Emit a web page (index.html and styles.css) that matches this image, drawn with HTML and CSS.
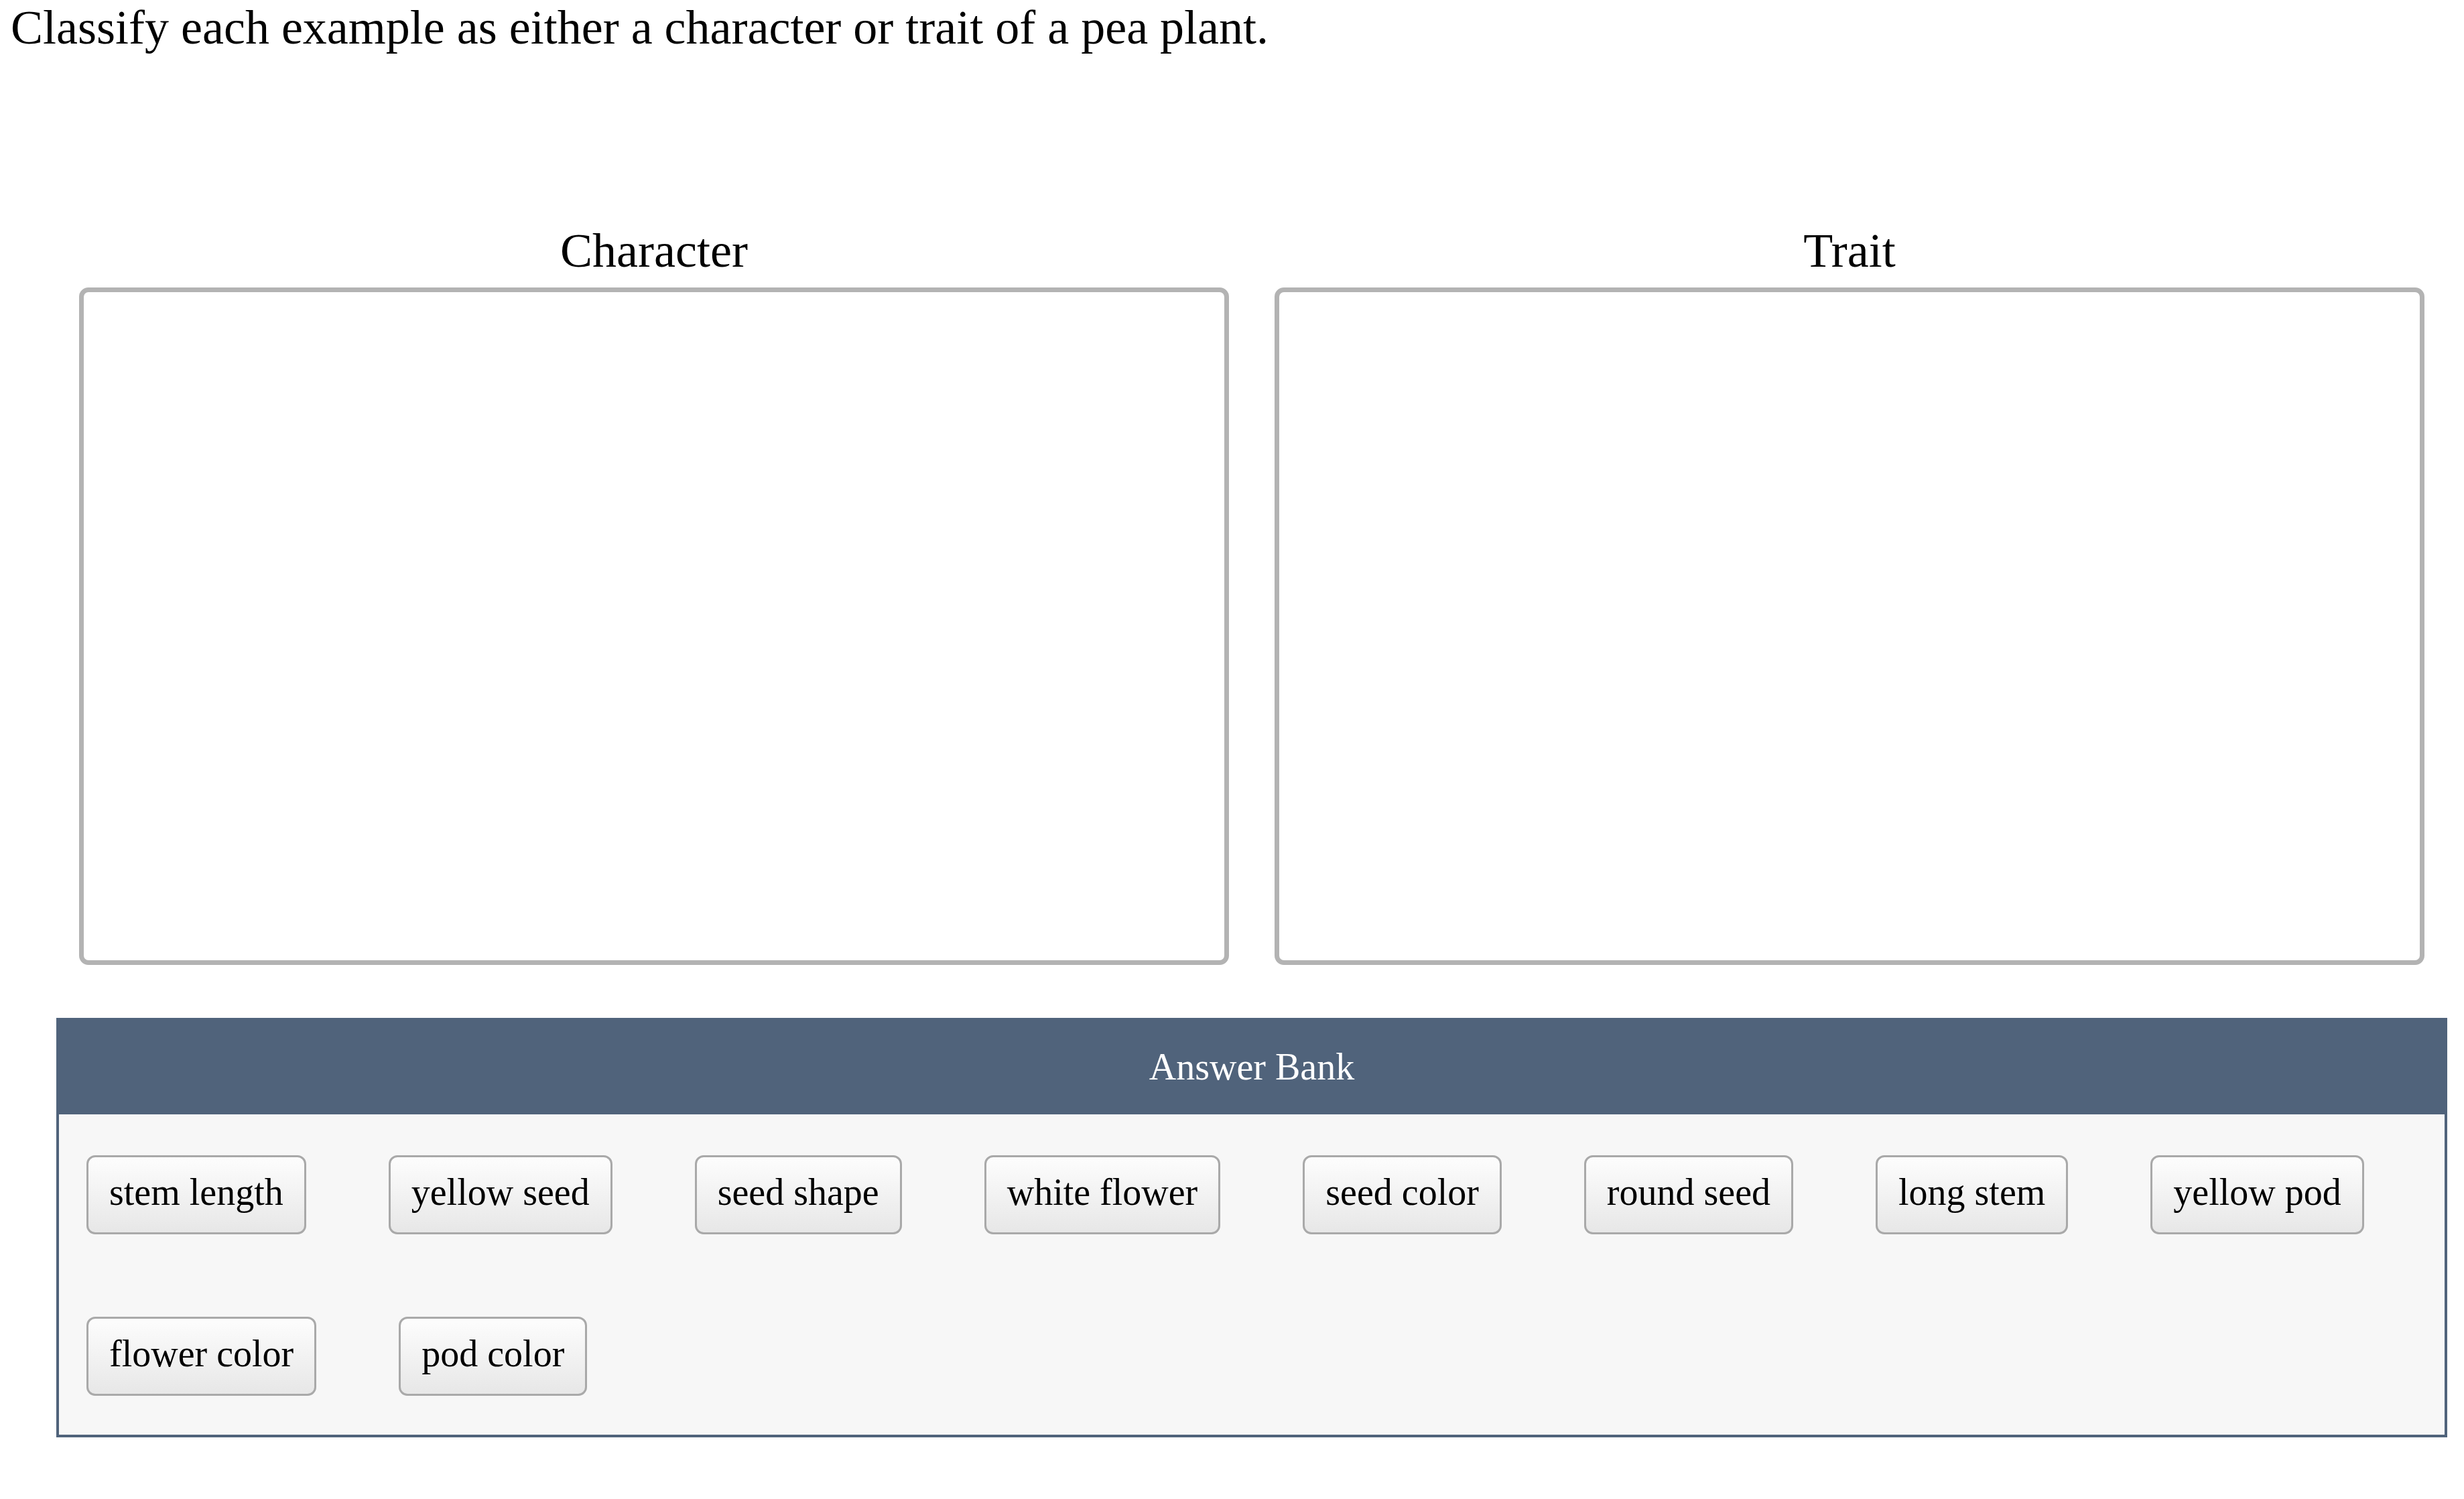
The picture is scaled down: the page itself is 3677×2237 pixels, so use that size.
FILE: index.html
```html
<!DOCTYPE html>
<html lang="en">
<head>
  <meta charset="UTF-8" />
  <title>Classify - Character or Trait</title>
  <link rel="stylesheet" href="styles.css">
</head>
<body>
  <!-- Question -->
  <p class="prompt">Classify each example as either a character or trait of a pea plant.</p>

  <!-- Drop targets -->
  <div class="bins">
    <div class="bin">
      <div class="bin-label">Character</div>
      <div class="bin-box"></div>
    </div>
    <div class="bin">
      <div class="bin-label">Trait</div>
      <div class="bin-box"></div>
    </div>
  </div>

  <!-- Answer bank -->
  <div class="bank">
    <div class="bank-header">Answer Bank</div>
    <div class="bank-items">
      <div class="chip">stem length</div>
      <div class="chip">yellow seed</div>
      <div class="chip">seed shape</div>
      <div class="chip">white flower</div>
      <div class="chip">seed color</div>
      <div class="chip">round seed</div>
      <div class="chip">long stem</div>
      <div class="chip">yellow pod</div>
      <div class="chip">flower color</div>
      <div class="chip">pod color</div>
    </div>
  </div>
</body>
</html>
```

FILE: styles.css
```css
* {
  margin: 0;
  padding: 0;
  box-sizing: border-box;
}

body {
  background-color: #fff;
  color: #000;
  font-family: "Liberation Serif", "Times New Roman", serif;
}

.prompt {
  font-size: 72px;
  line-height: 83px;
  padding-left: 16px;
}

.bins {
  display: flex;
  gap: 68px;
  padding-left: 118px;
  margin-top: 250px;
}

.bin {
  width: 1716px;
}

.bin-label {
  font-size: 72px;
  line-height: 83px;
  text-align: center;
  margin-bottom: 13px;
}

.bin-box {
  height: 1011px;
  border: 7px solid #b3b3b3;
  border-radius: 14px;
  background-color: #fff;
}

.bank {
  margin: 79px 0 0 84px;
  width: 3568px;
  border: 4px solid #50637b;
  background-color: #f7f7f7;
}

.bank-header {
  background-color: #50637b;
  color: #fff;
  font-size: 56px;
  height: 140px;
  line-height: 138px;
  text-align: center;
}

.bank-items {
  display: flex;
  flex-wrap: wrap;
  gap: 123px;
  padding: 61px 41px 58px;
}

.chip {
  font-size: 56px;
  line-height: 64px;
  padding: 20px 31px 28px;
  border: 3px solid #a9a9a9;
  border-radius: 13px;
  background: linear-gradient(#fdfdfd, #e7e7e7);
}
```
